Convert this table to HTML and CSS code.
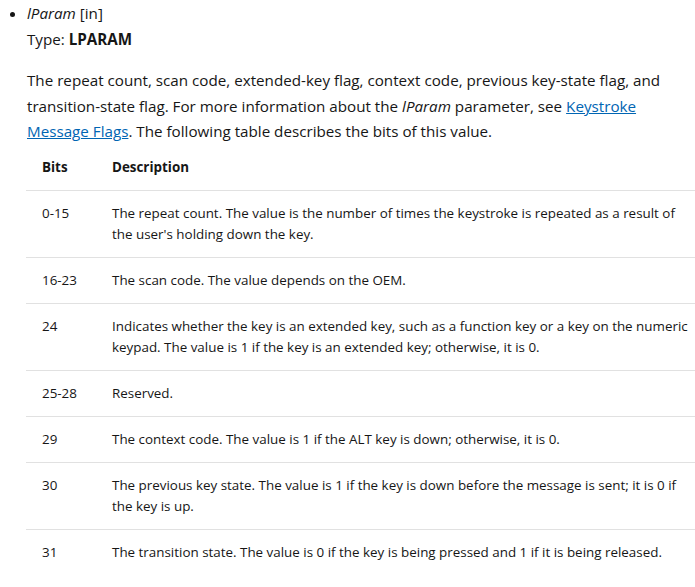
FILE: index.html
```html
<!DOCTYPE html>
<html lang="en">
<head>
<meta charset="utf-8">
<title>lParam</title>
<link rel="stylesheet" href="styles.css">
</head>
<body>
<ul class="params">
  <li class="param">
    <div class="param-name"><em>lParam</em> [in]</div>
    <div class="param-type">Type: <strong>LPARAM</strong></div>
    <p class="param-desc">The repeat count, scan code, extended-key flag, context code, previous key-state flag, and transition-state flag. For more information about the <em>lParam</em> parameter, see <a href="#">Keystroke Message Flags</a>. The following table describes the bits of this value.</p>
    <table class="bits">
      <colgroup>
        <col class="col-bits">
        <col class="col-desc">
      </colgroup>
      <thead>
        <tr><th>Bits</th><th>Description</th></tr>
      </thead>
      <tbody>
        <tr><td>0-15</td><td>The repeat count. The value is the number of times the keystroke is repeated as a result of the user's holding down the key.</td></tr>
        <tr><td>16-23</td><td>The scan code. The value depends on the OEM.</td></tr>
        <tr><td>24</td><td>Indicates whether the key is an extended key, such as a function key or a key on the numeric keypad. The value is 1 if the key is an extended key; otherwise, it is 0.</td></tr>
        <tr><td>25-28</td><td>Reserved.</td></tr>
        <tr><td>29</td><td>The context code. The value is 1 if the ALT key is down; otherwise, it is 0.</td></tr>
        <tr><td>30</td><td>The previous key state. The value is 1 if the key is down before the message is sent; it is 0 if the key is up.</td></tr>
        <tr><td>31</td><td>The transition state. The value is 0 if the key is being pressed and 1 if it is being released.</td></tr>
      </tbody>
    </table>
  </li>
</ul>
</body>
</html>
```
FILE: styles.css
```css
html, body {
  margin: 0;
  padding: 0;
  background: #ffffff;
}
body {
  font-family: "Open Sans", "Noto Sans", sans-serif;
  font-size: 15.2px;
  line-height: 25.6px;
  color: #161616;
  overflow: hidden;
  padding-top: 1px;
}
.params {
  margin: 0;
  padding: 0 0 0 27px;
  list-style: disc;
}
.param-desc {
  margin: 16px 0 0 0;
  width: 645px;
}
a {
  color: #0065b3;
  text-decoration: underline;
}
.bits {
  margin-left: -1px;
  width: 669px;
  table-layout: fixed;
  border-collapse: collapse;
  font-size: 13.4px;
  line-height: 21px;
}
.col-bits {
  width: 86px;
}
.bits th, .bits td {
  text-align: left;
  vertical-align: top;
  padding: 12px 16px;
  border-bottom: 1px solid #e1e1e1;
}
.bits th {
  font-weight: 700;
}
.bits tbody tr:last-child td {
  border-bottom: none;
}
.bits td:last-child, .bits th:last-child {
  padding-left: 0;
  padding-right: 0;
}
```
